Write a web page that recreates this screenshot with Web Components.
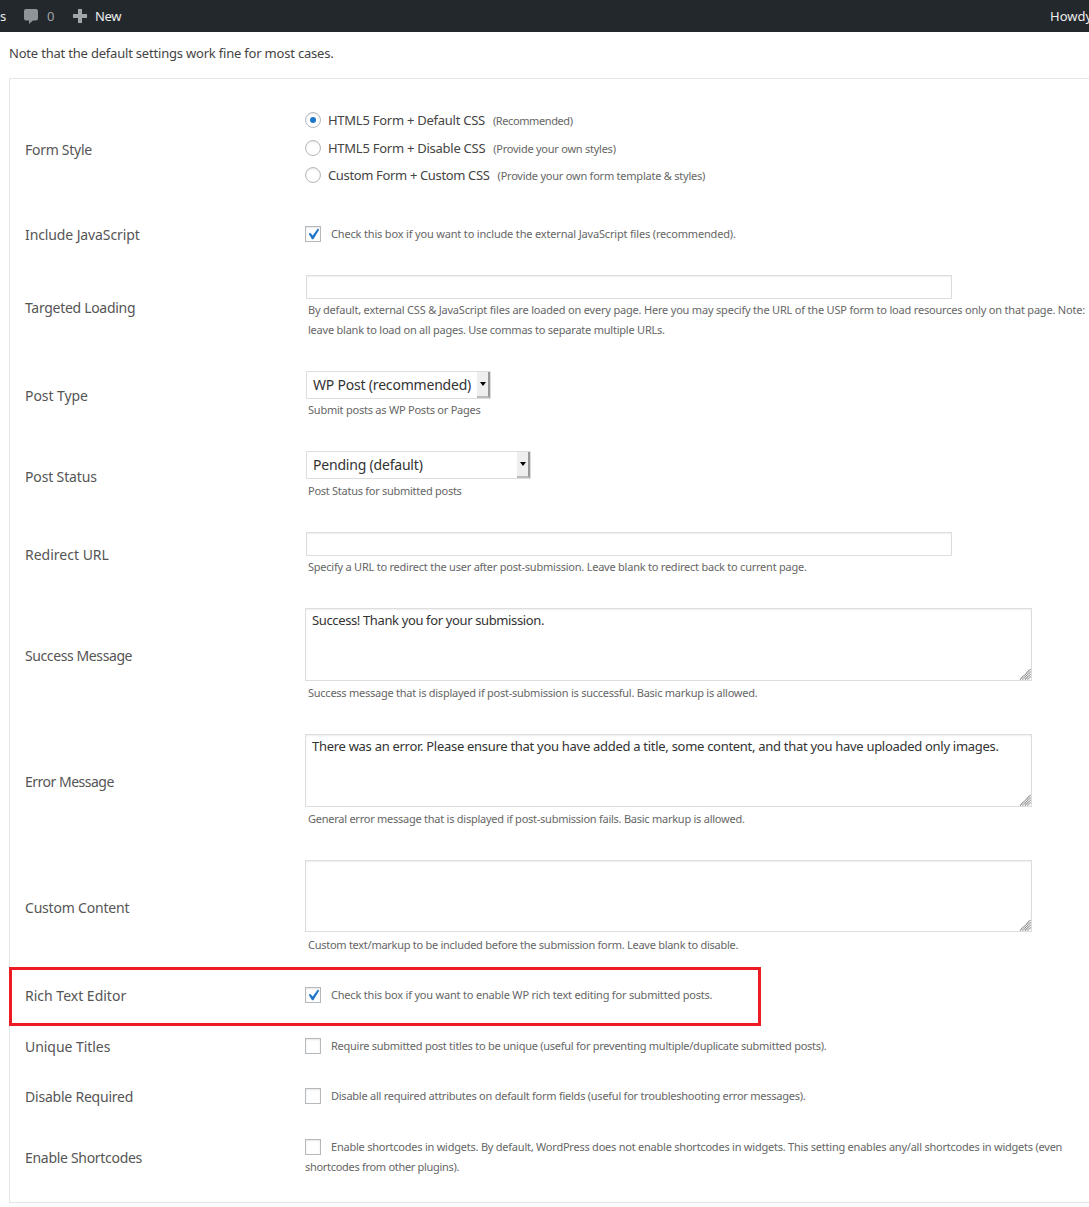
<!DOCTYPE html>
<html lang="en"><head><meta charset="utf-8"><title>USP settings</title>
<style>
html,body{margin:0;padding:0;background:#fff;overflow:hidden;height:1207px;width:1089px}
body{font-family:"Noto Sans","Open Sans",sans-serif;font-size:13px;color:#444}
</style></head><body>
<admin-bar></admin-bar>
<page-note>Note that the default settings work fine for most cases.</page-note>
<settings-panel>
  <setting-row label="Form Style" style="--h:118px;--shift:-3px">
    <wp-radio checked hint="(Recommended)" style="height:28px;--hs:-.4px">HTML5 Form + Default CSS</wp-radio>
    <wp-radio hint="(Provide your own styles)" style="height:28px;--ls:-.26px">HTML5 Form + Disable CSS</wp-radio>
    <wp-radio hint="(Provide your own form template &amp; styles)" style="height:26px;--ls:-.35px;--hs:-.23px">Custom Form + Custom CSS</wp-radio>
  </setting-row>
  <setting-row label="Include JavaScript" style="--h:52px;--lls:-.11px"><wp-check checked>Check this box if you want to include the external JavaScript files (recommended).</wp-check></setting-row>
  <setting-row label="Targeted Loading" style="--h:94px;--lls:-.3px">
    <wp-input></wp-input>
    <field-desc style="--ls:-.195px">By default, external CSS &amp; JavaScript files are loaded on every page. Here you may specify the URL of the USP form to load resources only on that page. Note:<br><span style="letter-spacing:-.225px">leave blank to load on all pages. Use commas to separate multiple URLs.</span></field-desc>
  </setting-row>
  <setting-row label="Post Type" style="--h:82px;--lls:-.06px">
    <wp-select style="--w:185px">WP Post (recommended)</wp-select>
    <field-desc style="--ls:-.23px">Submit posts as WP Posts or Pages</field-desc>
  </setting-row>
  <setting-row label="Post Status" style="--h:80px;--lls:-.15px">
    <wp-select style="--w:225px;margin-bottom:1px">Pending (default)</wp-select>
    <field-desc style="--ls:-.27px">Post Status for submitted posts</field-desc>
  </setting-row>
  <setting-row label="Redirect URL" style="--h:76px;--lls:0px">
    <wp-input></wp-input>
    <field-desc style="--ls:-.23px">Specify a URL to redirect the user after post-submission. Leave blank to redirect back to current page.</field-desc>
  </setting-row>
  <setting-row label="Success Message" style="--h:126px;--lls:-.4px">
    <wp-textarea style="--ls:-.37px">Success! Thank you for your submission.</wp-textarea>
    <field-desc style="--ls:-.25px">Success message that is displayed if post-submission is successful. Basic markup is allowed.</field-desc>
  </setting-row>
  <setting-row label="Error Message" style="--h:126px;--lls:-.5px">
    <wp-textarea style="--ls:-.29px">There was an error. Please ensure that you have added a title, some content, and that you have uploaded only images.</wp-textarea>
    <field-desc style="--ls:-.25px">General error message that is displayed if post-submission fails. Basic markup is allowed.</field-desc>
  </setting-row>
  <setting-row label="Custom Content" style="--h:126px;--lls:-.2px">
    <wp-textarea style="height:72px;margin-bottom:2px"></wp-textarea>
    <field-desc style="--ls:-.27px">Custom text/markup to be included before the submission form. Leave blank to disable.</field-desc>
  </setting-row>
  <setting-row label="Rich Text Editor" highlight style="--h:50px;--lls:0px"><wp-check checked style="--ls:-.2px">Check this box if you want to enable WP rich text editing for submitted posts.</wp-check></setting-row>
  <setting-row label="Unique Titles" style="--h:52px;--lls:-.05px"><wp-check style="--ls:-.26px">Require submitted post titles to be unique (useful for preventing multiple/duplicate submitted posts).</wp-check></setting-row>
  <setting-row label="Disable Required" style="--h:48px;--lls:-.22px"><wp-check style="--ls:-.25px">Disable all required attributes on default form fields (useful for troubleshooting error messages).</wp-check></setting-row>
  <setting-row label="Enable Shortcodes" style="--h:74px;--lls:-.3px"><wp-check style="--ls:-.23px">Enable shortcodes in widgets. By default, WordPress does not enable shortcodes in widgets. This setting enables any/all shortcodes in widgets (even<br><span style="letter-spacing:-.3px">shortcodes from other plugins).</span></wp-check></setting-row>
</settings-panel>
<script>
const FONT='"Noto Sans","Open Sans",sans-serif';
function def(name,html,init){
  const t=document.createElement('template');t.innerHTML=html;
  customElements.define(name,class extends HTMLElement{
    constructor(){super();this.attachShadow({mode:'open'}).appendChild(t.content.cloneNode(true));}
    connectedCallback(){if(init)init(this,this.shadowRoot);}
  });
}
def('admin-bar',`<style>
:host{display:flex;align-items:center;height:32px;background:#23282d;color:#eee;font:13px/32px ${FONT};overflow:hidden;white-space:nowrap}
.s{width:24px}
svg{display:block;flex:none}
.m{margin-top:1px;fill:#8f9499}
.c{color:#a0a5aa;margin-left:9px;width:26px}
.n{margin-left:8px;letter-spacing:-.4px}
.g{flex:1}
.h{width:39px}
</style>
<span class="s">s</span>
<svg class="m" width="14" height="15" viewBox="0 0 14 15"><path d="M2 0h10a2 2 0 0 1 2 2v7.500a2 2 0 0 1-2 2H9l-4 3.500v-3.500H2a2 2 0 0 1-2-2V2a2 2 0 0 1 2-2z"/></svg>
<span class="c">0</span>
<svg width="14" height="14" viewBox="0 0 14 14"><path fill="#a0a5aa" d="M5 0h4v5h5v4H9v5H5V9H0V5h5z"/></svg>
<span class="n">New</span><span class="g"></span><span class="h">Howdy</span>`);
def('page-note',`<style>:host{display:block;padding:11px 0 0 9px;height:35px;font:13px/20px ${FONT};letter-spacing:-.2px;color:#444}</style><slot></slot>`);
def('settings-panel',`<style>:host{display:block;margin:0 -40px 0 9px;border:1px solid #e5e5e5;padding:12px 0 7px 15px;background:#fff}</style><slot></slot>`);
def('setting-row',`<style>
:host{display:flex;align-items:center;min-height:var(--h);height:var(--h);position:relative}
.l{flex:none;width:280px;font:14px/20px ${FONT};letter-spacing:var(--lls,-.28px);color:#555}
.c{flex:1;min-width:0;display:flex;flex-direction:column;position:relative;top:var(--shift,-1px)}
.hl{display:none;position:absolute;left:-16px;top:-4px;width:752px;height:59px;box-sizing:border-box;border:3px solid #ed1c24;pointer-events:none}
:host([highlight]) .hl{display:block}
</style><div class="l"></div><div class="c"><slot></slot></div><div class="hl"></div>`,(e,s)=>{s.querySelector('.l').textContent=e.getAttribute('label')});
const box=`.b{flex:none;width:16px;height:16px;box-sizing:border-box;border:1px solid #b4b9be;background:#fff;box-shadow:inset 0 1px 2px rgba(0,0,0,.1)}`;
def('wp-radio',`<style>
:host{display:flex;align-items:center;font:13px/20px ${FONT};letter-spacing:var(--ls,-.26px);color:#444;white-space:nowrap}
${box}
.b{border-radius:50%;display:flex;align-items:center;justify-content:center;margin-right:7px}
.d{width:6px;height:6px;border-radius:50%;background:#1f76c8;display:none}
:host([checked]) .d{display:block}
.h{font-size:11px;letter-spacing:var(--hs,-.25px);color:#666;margin-left:8px;padding-top:2px}
</style><span class="b"><span class="d"></span></span><span><slot></slot></span><span class="h"></span>`,(e,s)=>{s.querySelector('.h').textContent=e.getAttribute('hint')});
def('wp-check',`<style>
:host{display:block;font:11px/20px ${FONT};letter-spacing:var(--ls,-.17px);color:#666;white-space:nowrap}
${box}
.b{display:inline-block;vertical-align:middle;margin-right:10px;position:relative;top:-1px}
svg{display:none;position:absolute;left:-3.500px;top:-4px}
:host([checked]) svg{display:block}
</style><span class="b"><svg width="20" height="23" viewBox="0 0 20 20" preserveAspectRatio="none"><path fill="#1f76c8" d="M14.830 4.890l1.340.940-5.810 8.380H9.020L5.780 9.670l1.340-1.250 2.570 2.400z"/></svg></span><slot></slot>`);
def('wp-input',`<style>:host{display:block;width:646px;height:24px;box-sizing:border-box;margin-left:1px;border:1px solid #ddd;background:#fff;box-shadow:inset 0 1px 2px rgba(0,0,0,.07)}</style>`);
def('field-desc',`<style>:host{display:block;font:11px/20px ${FONT};letter-spacing:var(--ls,-.2px);color:#666;margin:1px 0 0 3px;white-space:nowrap}</style><slot></slot>`);
def('wp-select',`<style>
:host{display:flex;align-items:stretch;width:var(--w);height:28px;box-sizing:border-box;margin-left:1px;border:1px solid #ddd;background:#fff;font:14px/26px ${FONT};letter-spacing:-.2px;color:#333;white-space:nowrap}
.t{flex:1;padding-left:6px;overflow:hidden}
.a{flex:none;width:11px;background:#eee;border-right:2px solid #999;border-bottom:2px solid #bbb;display:flex;align-items:center;justify-content:center}
.a i{border:3px solid transparent;border-top:4px solid #000;border-bottom:0}
</style><span class="t"><slot></slot></span><span class="a"><i></i></span>`);
def('wp-textarea',`<style>
:host{display:block;position:relative;width:727px;height:73px;margin-bottom:1px;box-sizing:border-box;border:1px solid #ddd;background:#fff;box-shadow:inset 0 1px 2px rgba(0,0,0,.07);padding:1px 6px;font:13px/20px ${FONT};letter-spacing:var(--ls,-.27px);color:#333;white-space:nowrap;overflow:hidden}
svg{position:absolute;right:0;bottom:0}
</style><slot></slot><svg width="12" height="12" viewBox="0 0 12 12"><path stroke="#777" stroke-width="1.100" stroke-dasharray="1.200 .5" fill="none" d="M1 11.500L11.500 1M3.500 11.500l8-8M6 11.500l5.500-5.500M8.500 11.500l3-3"/></svg>`);
</script>
</body></html>
